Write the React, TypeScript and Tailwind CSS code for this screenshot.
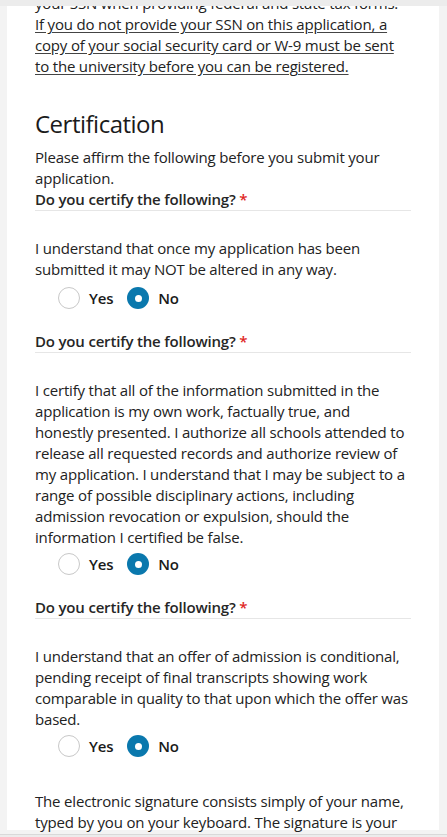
import React from "react";

const font = { fontFamily: '"Open Sans", "Noto Sans", sans-serif' };

function Radio({ checked }: { checked: boolean }) {
  return checked ? (
    <span className="flex h-[22px] w-[22px] items-center justify-center rounded-full bg-[#0a78ad]">
      <span className="h-[7px] w-[7px] rounded-full bg-white" />
    </span>
  ) : (
    <span className="h-[22px] w-[22px] rounded-full border border-[#c8c8c8] bg-white" />
  );
}

function RadioRow() {
  return (
    <div className="flex h-[24px] items-center pl-[23px] text-[15px] font-semibold text-[#1a1a1a]">
      <Radio checked={false} />
      <span className="ml-[9px]">Yes</span>
      <span className="ml-[14px]">
        <Radio checked={true} />
      </span>
      <span className="ml-[9px]">No</span>
    </div>
  );
}

function Label() {
  return (
    <div className="border-b border-[#e6e6e6] text-[15px] font-semibold leading-[21px] text-[#262626]">
      Do you certify the following? <span className="text-[#e0261e]">*</span>
    </div>
  );
}

export default function App() {
  return (
    <div className="relative h-[837px] overflow-hidden bg-[#f3f3f3]" style={font}>
      <div className="absolute left-0 right-0 top-0 z-10 h-[6px] bg-[#ececec]" />
      <div className="absolute bottom-0 left-0 right-0 z-10 h-[3px] border-t border-[#d9d9d9] bg-[#ececec]" />
      <div className="mx-[7px] mr-[8px] h-full bg-white pl-[28px] pr-[28px]">
        <div className="-mt-[7px] w-[376px] text-[15px] leading-[21px] tracking-[-0.18px] text-[#222]">
          <p>your SSN when providing federal and state tax forms.</p>
          <p className="underline decoration-[#444] underline-offset-2">
            If you do not provide your SSN on this application, a copy of your social security card or W-9 must be sent to the university before you can be registered.
          </p>

          <h2 className="mt-[31px] text-[24px] font-normal leading-[32px] tracking-[-0.5px] text-[#1b1b1b]">Certification</h2>
          <p className="mt-[7px]">Please affirm the following before you submit your application.</p>
          <Label />

          <p className="mt-[27px]">
            I understand that once my application has been submitted it may NOT be altered in any way.
          </p>
          <div className="mt-[6px]">
            <RadioRow />
          </div>

          <div className="mt-[21px]">
            <Label />
          </div>
          <p className="mt-[27px]">
            I certify that all of the information submitted in the application is my own work, factually true, and honestly presented. I authorize all schools attended to release all requested records and authorize review of my application. I understand that I may be subject to a range of possible disciplinary actions, including admission revocation or expulsion, should the information I certified be false.
          </p>
          <div className="mt-[4px]">
            <RadioRow />
          </div>

          <div className="mt-[21px]">
            <Label />
          </div>
          <p className="mt-[27px]">
            I understand that an offer of admission is conditional, pending receipt of final transcripts showing work comparable in quality to that upon which the offer was based.
          </p>
          <div className="mt-[4px]">
            <RadioRow />
          </div>

          <p className="mt-[33px]">
            The electronic signature consists simply of your name, typed by you on your keyboard. The signature is your
            legal signature and is binding.
          </p>
        </div>
      </div>
    </div>
  );
}
